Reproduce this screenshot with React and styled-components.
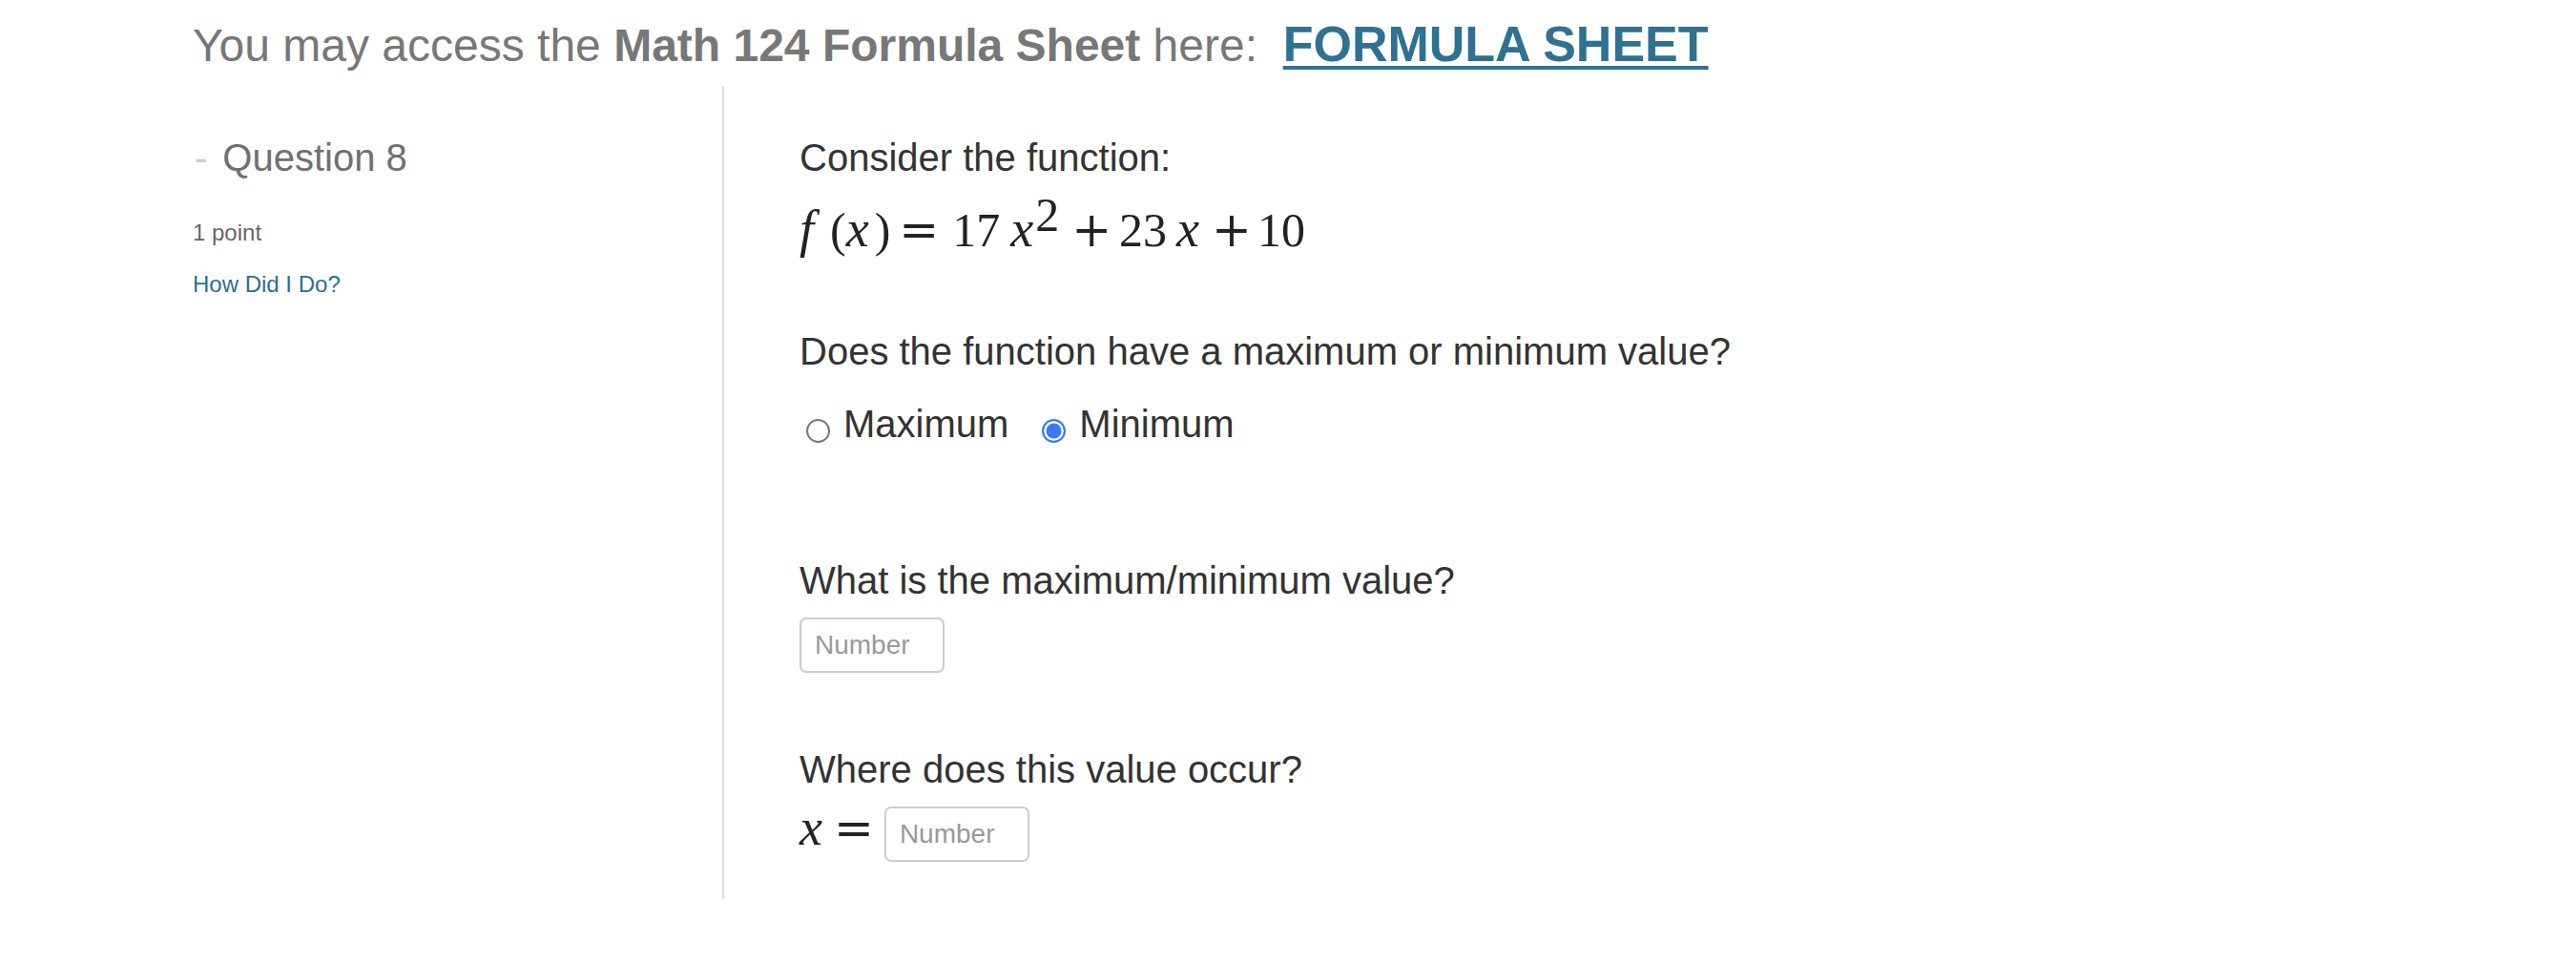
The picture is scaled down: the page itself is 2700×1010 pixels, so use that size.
import React from "react";
import styled, { createGlobalStyle } from "styled-components";

const GlobalStyle = createGlobalStyle`
  html, body {
    margin: 0;
    padding: 0;
    background: #fff;
  }
  body {
    font-family: "Liberation Sans", Arial, Helvetica, sans-serif;
    color: #333;
  }
`;

const Page = styled.div`
  width: 2700px;
  min-height: 1010px;
`;

const Banner = styled.div`
  padding: 18px 0 0 202px;
  font-size: 48px;
  line-height: 56px;
  color: #777;
  white-space: nowrap;

  b {
    font-weight: 700;
  }
`;

const SheetLink = styled.a`
  font-size: 52px;
  font-weight: 700;
  color: #2f7191;
  text-decoration: underline;
  text-decoration-thickness: 4px;
  text-underline-offset: 5px;
`;

const Columns = styled.div`
  display: flex;
  margin-top: 14px;
`;

const Sidebar = styled.aside`
  width: 555px;
  padding-left: 202px;
  flex-shrink: 0;
`;

const QuestionTitle = styled.h2`
  margin: 51px 0 0;
  font-size: 40px;
  line-height: 48px;
  font-weight: 400;
  color: #707070;
  display: flex;
  align-items: center;
`;

const Collapse = styled.span`
  color: #ccc;
  margin: 0 16px 0 2px;
`;

const Meta = styled.div`
  margin-top: ${(p) => p.$gap}px;
  font-size: 24px;
  line-height: 30px;
  color: ${(p) => (p.$link ? "#2a6f91" : "#666")};
`;

const Content = styled.section`
  border-left: 2px solid #ddd;
  padding: 51px 0 39px 79px;
  display: flex;
  flex-direction: column;
  align-items: flex-start;
`;

const Prompt = styled.p`
  margin: ${(p) => p.$gap || 0}px 0 0;
  font-size: 40px;
  line-height: 48px;
  color: #333;
`;

const Formula = styled.div`
  margin-top: 23px;
  height: 56px;
  font-family: "Liberation Serif", "Times New Roman", serif;
  font-size: 50px;
  line-height: 56px;
  color: #222;
  white-space: nowrap;
`;

const Tok = styled.span`
  display: inline-block;
  margin-left: ${(p) => p.$ml || 0}px;
  font-style: ${(p) => (p.$it ? "italic" : "normal")};
  font-size: ${(p) => (p.$it ? "54px" : "inherit")};
  font-family: ${(p) =>
    p.$op ? '"DejaVu Serif", "Liberation Serif", serif' : "inherit"};
  line-height: ${(p) => (p.$sup ? 0 : "inherit")};
  vertical-align: ${(p) => (p.$sup ? "16px" : "baseline")};
`;

const Choices = styled.div`
  margin-top: 28px;
  display: flex;
  align-items: flex-start;
`;

const Choice = styled.label`
  display: flex;
  align-items: flex-start;
  margin: 0 28px 0 7px;
  font-size: 40px;
  line-height: 48px;
  color: #333;
`;

const RadioDot = styled.span`
  box-sizing: border-box;
  width: 25px;
  height: 25px;
  margin: 19px 14px 0 0;
  border-radius: 50%;
  border: 2px solid ${(p) => (p.$on ? "#3a7bf2" : "#777")};
  background: ${(p) => (p.$on ? "#3a7bf2" : "#fff")};
  box-shadow: ${(p) => (p.$on ? "inset 0 0 0 2.5px #fff" : "none")};
  flex-shrink: 0;
`;

const NumberBox = styled.input`
  box-sizing: border-box;
  width: 152px;
  height: 58px;
  margin-top: ${(p) => p.$gap || 0}px;
  padding: 0 14px;
  border: 2px solid #ccc;
  border-radius: 7px;
  font-family: "Liberation Sans", Arial, sans-serif;
  font-size: 28px;
  color: #333;
  outline: none;

  &::placeholder {
    color: #999;
  }
`;

const AnswerRow = styled.div`
  margin-top: 15px;
  display: flex;
  align-items: flex-start;
`;

const MathLead = styled.span`
  font-family: "Liberation Serif", "Times New Roman", serif;
  font-size: 50px;
  line-height: 44px;
  color: #222;
  white-space: nowrap;
  margin-right: 11px;
`;

export default function App() {
  return (
    <Page>
      <GlobalStyle />
      <Banner>
        You may access the <b>Math 124 Formula Sheet</b> here:&nbsp;&nbsp;
        <SheetLink href="#">FORMULA SHEET</SheetLink>
      </Banner>

      <Columns>
        <Sidebar>
          <QuestionTitle>
            <Collapse>-</Collapse>Question 8
          </QuestionTitle>
          <Meta $gap={40}>1 point</Meta>
          <Meta $gap={24} $link>
            How Did I Do?
          </Meta>
        </Sidebar>

        <Content>
          <Prompt>Consider the function:</Prompt>
          <Formula>
            <Tok $it>f</Tok>
            <Tok $ml={17}>(</Tok>
            <Tok $it>x</Tok>
            <Tok $ml={6}>)</Tok>
            <Tok $op $ml={9}>=</Tok>
            <Tok $ml={14}>17</Tok>
            <Tok $it $ml={11}>x</Tok>
            <Tok $sup $ml={2}>2</Tok>
            <Tok $op $ml={13}>+</Tok>
            <Tok $ml={8}>23</Tok>
            <Tok $it $ml={10}>x</Tok>
            <Tok $op $ml={13}>+</Tok>
            <Tok $ml={6}>10</Tok>
          </Formula>

          <Prompt $gap={76}>Does the function have a maximum or minimum value?</Prompt>
          <Choices>
            <Choice>
              <RadioDot />
              Maximum
            </Choice>
            <Choice>
              <RadioDot $on />
              Minimum
            </Choice>
          </Choices>

          <Prompt $gap={116}>What is the maximum/minimum value?</Prompt>
          <NumberBox $gap={15} placeholder="Number" />

          <Prompt $gap={77}>Where does this value occur?</Prompt>
          <AnswerRow>
            <MathLead>
              <Tok $it>x</Tok>
              <Tok $op $ml={12}>=</Tok>
            </MathLead>
            <NumberBox placeholder="Number" />
          </AnswerRow>
        </Content>
      </Columns>
    </Page>
  );
}
